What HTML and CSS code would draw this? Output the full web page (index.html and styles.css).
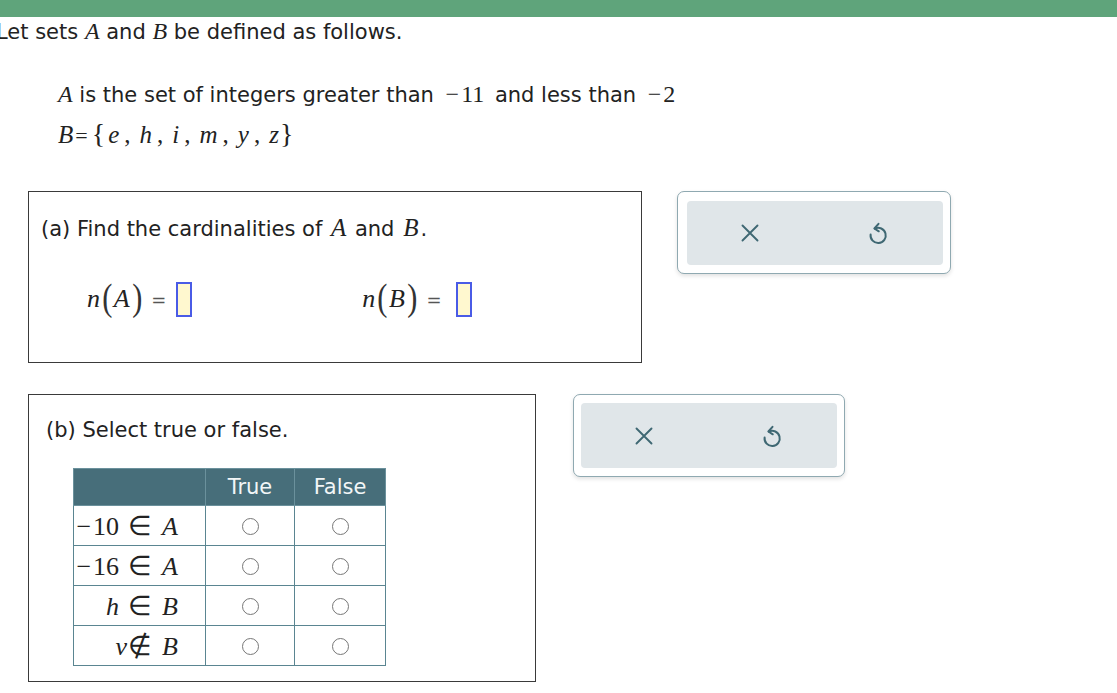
FILE: index.html
```html
<!DOCTYPE html>
<html>
<head>
<meta charset="utf-8">
<link rel="stylesheet" href="styles.css">
</head>
<body>
<div class="topbar"></div>
<div class="content">
  <p class="intro">Let sets <span class="m">A</span> and <span class="m">B</span> be defined as follows.</p>
  <div class="defs">
    <p class="def"><span class="m">A</span> is the set of integers greater than <span class="num"><span class="mn neg">&minus;</span><span class="mn">11</span></span> and less than <span class="num"><span class="mn neg">&minus;</span><span class="mn">2</span></span></p>
    <p class="def setb"><span class="m">B</span><span class="mn eq">=</span><span class="brace">{</span><span class="m">e</span><span class="mn cm">,</span><span class="m">h</span><span class="mn cm">,</span><span class="m">i</span><span class="mn cm">,</span><span class="m">m</span><span class="mn cm">,</span><span class="m">y</span><span class="mn cm">,</span><span class="m">z</span><span class="brace">}</span></p>
  </div>

  <div class="row row-a">
    <div class="qbox qa">
      <p class="qtitle">(a) Find the cardinalities of <span class="m">A</span> and <span class="m">B</span>.</p>
      <div class="answers">
        <div class="ans"><span class="m">n</span><span class="paren">(</span><span class="m">A</span><span class="paren">)</span><span class="eqs">=</span><span class="inp"></span></div>
        <div class="ans ans-b"><span class="m">n</span><span class="paren">(</span><span class="m">B</span><span class="paren">)</span><span class="eqs">=</span><span class="inp"></span></div>
      </div>
    </div>
    <div class="tools">
      <div class="tools-in">
        <span class="slot"><svg width="20" height="20" viewBox="0 0 20 20"><path d="M2.5 2.5L17.5 17.5M17.5 2.5L2.5 17.5" stroke="#3f6873" stroke-width="1.9" fill="none" stroke-linecap="round"/></svg></span>
        <span class="slot"><svg width="22" height="26" viewBox="0 0 22 26"><path d="M7.8 8.6A7.6 7.6 0 1 1 3.6 14.5" stroke="#3f6873" stroke-width="2" fill="none" stroke-linecap="round"/><path d="M11.5 3.8L7.4 8.5L11.8 11.3" stroke="#3f6873" stroke-width="2" fill="none" stroke-linecap="round" stroke-linejoin="round"/></svg></span>
      </div>
    </div>
  </div>

  <div class="row row-b">
    <div class="qbox qb">
      <p class="qtitle">(b) Select true or false.</p>
      <table class="tf">
        <tr class="hd"><th class="c0"></th><th class="c1">True</th><th class="c2">False</th></tr>
        <tr><td class="c0"><span class="mn neg">&minus;</span><span class="mn">10</span><span class="mn rel">&isin;</span><span class="m">A</span></td><td><span class="radio"></span></td><td><span class="radio"></span></td></tr>
        <tr><td class="c0"><span class="mn neg">&minus;</span><span class="mn">16</span><span class="mn rel">&isin;</span><span class="m">A</span></td><td><span class="radio"></span></td><td><span class="radio"></span></td></tr>
        <tr><td class="c0"><span class="m">h</span><span class="mn rel">&isin;</span><span class="m">B</span></td><td><span class="radio"></span></td><td><span class="radio"></span></td></tr>
        <tr><td class="c0"><span class="m">v</span><span class="mn rel nrel">&notin;</span><span class="m">B</span></td><td><span class="radio"></span></td><td><span class="radio"></span></td></tr>
      </table>
    </div>
    <div class="tools tools-b">
      <div class="tools-in">
        <span class="slot"><svg width="20" height="20" viewBox="0 0 20 20"><path d="M2.5 2.5L17.5 17.5M17.5 2.5L2.5 17.5" stroke="#3f6873" stroke-width="1.9" fill="none" stroke-linecap="round"/></svg></span>
        <span class="slot"><svg width="22" height="26" viewBox="0 0 22 26"><path d="M7.8 8.6A7.6 7.6 0 1 1 3.6 14.5" stroke="#3f6873" stroke-width="2" fill="none" stroke-linecap="round"/><path d="M11.5 3.8L7.4 8.5L11.8 11.3" stroke="#3f6873" stroke-width="2" fill="none" stroke-linecap="round" stroke-linejoin="round"/></svg></span>
      </div>
    </div>
  </div>
</div>
</body>
</html>
```

FILE: styles.css
```css
html, body {
  margin: 0;
  padding: 0;
  background: #ffffff;
}
body {
  font-family: "DejaVu Sans", Verdana, sans-serif;
  font-size: 21px;
  color: #222222;
  width: 1117px;
  height: 693px;
  overflow: hidden;
}
p { margin: 0; }
.topbar {
  height: 17px;
  background: #5fa47b;
}
.m {
  font-family: "Liberation Serif", "Times New Roman", serif;
  font-style: italic;
  font-size: 24px;
}
.mn {
  font-family: "Liberation Serif", "Times New Roman", serif;
  font-size: 24px;
}
.intro {
  margin-left: -4px;
  height: 28px;
  line-height: 28px;
  margin-top: 0;
}
.defs {
  padding-left: 58px;
  padding-top: 35px;
}
.def {
  height: 40px;
  line-height: 28px;
  white-space: nowrap;
}
.num { margin: 0 4px 0 5px; }
.num .neg { margin-right: 2px; }
.setb .m, .setb .mn { font-size: 25px; }
.setb .eq { margin: 0 3px 0 2px; font-size: 22px; }
.setb .cm { margin: 0 9px 0 5px; }
.brace {
  font-family: "Liberation Serif", serif;
  font-size: 28px;
  margin: 0 3px 0 1px;
}
.row {
  display: flex;
  align-items: flex-start;
  margin-left: 28px;
}
.row-a { margin-top: 31px; }
.row-b { margin-top: 31px; }
.qbox {
  border: 1.5px solid #3a3a3a;
  box-sizing: border-box;
  background: #fff;
}
.qa {
  width: 614px;
  height: 172px;
  padding: 22px 0 0 12px;
}
.qb {
  width: 508px;
  height: 288px;
  padding: 21px 0 0 17px;
}
.qtitle {
  line-height: 28px;
  white-space: nowrap;
}
.qtitle .m { font-size: 25px; margin: 0 2px; }
.answers {
  display: flex;
  padding-left: 46px;
  margin-top: 36px;
}
.ans {
  display: flex;
  align-items: center;
  height: 40px;
}
.ans .m { font-size: 26px; }
.ans-b { margin-left: 170px; }
.paren {
  font-family: "Liberation Serif", serif;
  font-size: 38px;
  color: #333;
  margin: -4px 0 0 1px;
  display: inline-block;
  transform: scaleX(0.8);
}
.eqs {
  margin: 0 10px 0 8px;
  font-size: 18px;
  color: #555;
}
.inp {
  display: inline-block;
  width: 12px;
  height: 31px;
  border: 2px solid #4a5be6;
  background: #fff8cf;
}
.ans-b .eqs { margin-right: 14px; }
.tools {
  margin-left: 35px;
  width: 274px;
  height: 83px;
  box-sizing: border-box;
  border: 1px solid #8fa9b1;
  border-radius: 7px;
  padding: 9px 7px 8px 9px;
  box-shadow: 0 2px 4px rgba(0,0,0,0.12);
  background: #fff;
}
.tools-b {
  margin-left: 37px;
  width: 272px;
  height: 83px;
  padding: 8px 7px 8px 7px;
}
.tools-in {
  height: 100%;
  background: #e0e6e9;
  border-radius: 4px;
  display: grid;
  grid-template-columns: 125px 131px;
  align-items: center;
}
.slot {
  display: flex;
  justify-content: center;
  align-items: center;
}
.slot svg { display: block; }
.tf {
  border-collapse: collapse;
  margin-top: 24px;
  margin-left: 27px;
}
.tf th, .tf td {
  border: 1px solid #5a8591;
  padding: 0;
  text-align: center;
}
.tf .hd th {
  background: #476e7a;
  color: #f2f6f7;
  font-weight: normal;
  height: 36px;
  font-size: 21px;
  border-color: #6b919c;
}
.tf .c0 { width: 131px; }
.tf .c1 { width: 88px; }
.tf .c2 { width: 90px; }
.tf td { height: 39px; }
.tf td.c0 {
  text-align: right;
  padding-right: 27px;
  box-sizing: border-box;
  white-space: nowrap;
}
.tf td.c0 .m, .tf td.c0 .mn { font-size: 26px; }
.neg { margin-right: 2px; }
.tf td.c0 .rel { margin: 0 10px 0 9px; font-size: 27px; }
.tf td.c0 .nrel { margin-left: 1px; }
.radio {
  display: inline-block;
  width: 17px;
  height: 17px;
  border: 1px solid #777;
  border-radius: 50%;
  box-sizing: border-box;
  vertical-align: middle;
}
```
